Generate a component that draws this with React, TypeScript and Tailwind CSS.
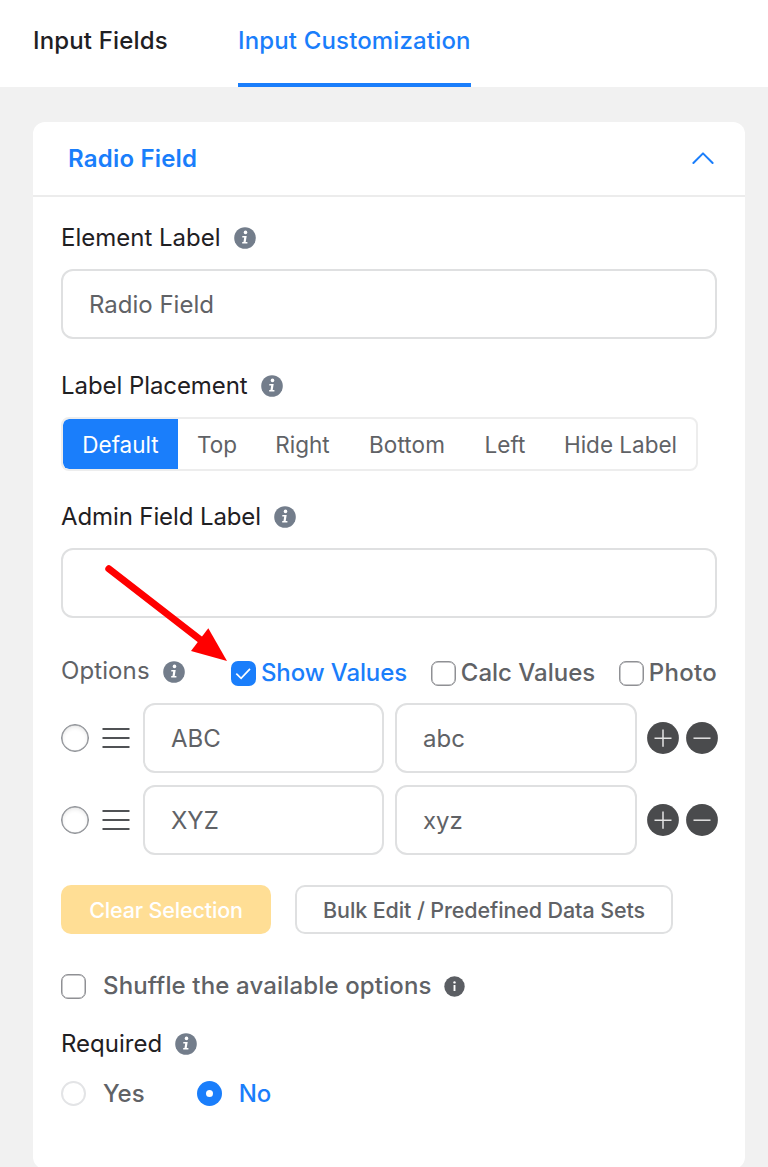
import { useState } from 'react';

interface Option {
  label: string;
  value: string;
}

const placements = [
  { name: 'Default', style: 'w-[115px]' },
  { name: 'Top', style: 'w-[78px]' },
  { name: 'Right', style: 'w-[93px]' },
  { name: 'Bottom', style: 'w-[116px] tracking-[0.1px]' },
  { name: 'Left', style: 'w-[80px]' },
  { name: 'Hide Label', style: 'w-[151px]' },
];

function InfoIcon() {
  return (
    <svg viewBox="0 0 22 22" className="h-[22px] w-[22px] shrink-0">
      <circle cx="11" cy="11" r="10.8" fill="#737d8b" />
      <circle cx="11.5" cy="5.4" r="1.8" fill="#fff" />
      <path d="M8.3 9h4.4l-1 6.1h1.7v1.4H8.2v-1.4h1.3l.7-4.7H8.3z" fill="#fff" />
    </svg>
  );
}

function SmallInfoIcon() {
  return (
    <svg viewBox="0 0 21 21" className="h-[21px] w-[21px] shrink-0">
      <circle cx="10.5" cy="10.5" r="10.2" fill="#5b5e63" />
      <circle cx="10.5" cy="6.4" r="1.2" fill="#fff" />
      <path d="M10.5 9v6" stroke="#fff" strokeWidth="1.9" />
    </svg>
  );
}

function FieldLabel({ text, className = '' }: { text: string; className?: string }) {
  return (
    <div className={`flex h-8 items-center gap-[13px] text-2xl text-[#1f2023] ${className}`}>
      <span className="whitespace-nowrap pt-px">{text}</span>
      <div className="pt-[2px]">
        <InfoIcon />
      </div>
    </div>
  );
}

function CheckBox({
  label,
  checked,
  onChange,
  className = '',
}: {
  label: string;
  checked: boolean;
  onChange: () => void;
  className?: string;
}) {
  return (
    <button
      type="button"
      onClick={onChange}
      className={`flex items-center whitespace-nowrap text-2xl font-[550] ${
        checked ? 'text-[#1a7efb]' : 'text-[#606266]'
      } ${className}`}
    >
      <span
        className={`flex h-[25px] w-[25px] shrink-0 items-center justify-center rounded-[7px] ${
          checked
            ? 'bg-[#1a7efb]'
            : 'border border-[#8f9094] bg-white shadow-[inset_0_0_0_0.5px_#8f9094]'
        }`}
      >
        {checked && (
          <svg viewBox="0 0 25 25" className="h-[25px] w-[25px]">
            <path d="M5.3 12.6l4.8 4.7 8.9-9.4" fill="none" stroke="#fff" strokeWidth="1.7" />
          </svg>
        )}
      </span>
      {label}
    </button>
  );
}

function RoundButton({ plus = false }: { plus?: boolean }) {
  return (
    <button type="button" className="h-8 w-8 shrink-0">
      <svg viewBox="0 0 32 32" className="h-8 w-8">
        <circle cx="16" cy="16" r="15.9" fill="#4a4b4d" />
        <path
          d={plus ? 'M7.5 16.2h17M16 7.5v17.2' : 'M7.5 16.2h17'}
          stroke="#e4e4e4"
          strokeWidth="1.5"
        />
      </svg>
    </button>
  );
}

export default function App() {
  const [elementLabel, setElementLabel] = useState('Radio Field');
  const [adminLabel, setAdminLabel] = useState('');
  const [placement, setPlacement] = useState('Default');
  const [showValues, setShowValues] = useState(true);
  const [calcValues, setCalcValues] = useState(false);
  const [photo, setPhoto] = useState(false);
  const [shuffle, setShuffle] = useState(false);
  const [required, setRequired] = useState('No');
  const [options, setOptions] = useState<Option[]>([
    { label: 'ABC', value: 'abc' },
    { label: 'XYZ', value: 'xyz' },
  ]);

  const updateOption = (index: number, change: Partial<Option>) => {
    setOptions(prev => prev.map((o, i) => (i === index ? { ...o, ...change } : o)));
  };

  const inputStyle =
    'block h-[70px] shrink-0 rounded-xl border-2 border-[#dfe0e1] bg-white px-[26px] text-2xl text-[#606266] outline-none';

  return (
    <div className="relative h-[1167px] w-[768px] overflow-hidden bg-[#f1f1f1] font-['Inter',sans-serif]">
      {/* Tabs */}
      <div className="flex h-[87px] gap-[70px] bg-white pl-[33px] text-2xl font-medium tracking-[0.15px]">
        <button type="button" className="h-[87px] w-[135px] whitespace-nowrap pb-[5px] text-left text-[#1f2023]">
          Input Fields
        </button>
        <button
          type="button"
          className="h-[87px] w-[233px] whitespace-nowrap border-b-4 border-[#1a7efb] pb-px text-left text-[#1a7efb]"
        >
          Input Customization
        </button>
      </div>

      <div className="mt-[35px] ml-[33px] h-[1047px] w-[712px] rounded-xl bg-white">
        {/* Card header */}
        <div className="flex h-[75px] items-center justify-between border-b-2 border-[#ececec] pr-[31px] pl-[35px]">
          <h2 className="text-2xl font-semibold tracking-[0.2px] text-[#1a7efb]">Radio Field</h2>
          <svg viewBox="0 0 22 14" className="mb-px h-[14px] w-[22px]">
            <path
              d="M1.4 12L11 2.4 20.6 12"
              fill="none"
              stroke="#1a7efb"
              strokeWidth="2"
              strokeLinecap="round"
              strokeLinejoin="round"
            />
          </svg>
        </div>

        <div className="px-7 pt-6">
          <FieldLabel text="Element Label" />
          <input
            type="text"
            value={elementLabel}
            onChange={e => setElementLabel(e.target.value)}
            className={`mt-4 w-full ${inputStyle}`}
          />

          <FieldLabel text="Label Placement" className="mt-[30px] tracking-[-0.07px]" />
          <div className="mt-4 flex h-[54px] w-[637px] overflow-hidden rounded-lg border-2 border-[#ededed] text-[22.5px]">
            {placements.map(p => (
              <button
                key={p.name}
                type="button"
                onClick={() => setPlacement(p.name)}
                className={`h-full whitespace-nowrap pt-px ${p.style} ${
                  placement === p.name ? 'rounded-l-md bg-[#1a7efb] text-white' : 'text-[#606266]'
                }`}
              >
                {p.name}
              </button>
            ))}
          </div>

          <FieldLabel text="Admin Field Label" className="mt-[29px] tracking-[-0.11px]" />
          <input
            type="text"
            value={adminLabel}
            onChange={e => setAdminLabel(e.target.value)}
            className={`mt-4 w-full ${inputStyle}`}
          />

          {/* Options */}
          <div className="mt-[37px] flex h-9 items-center">
            <div className="mb-1 flex w-[170px] items-center gap-[13px] text-2xl text-[#606266]">
              <span className="tracking-[0.1px]">Options</span>
              <div className="pt-[2px]">
                <InfoIcon />
              </div>
            </div>
            <CheckBox
              label="Show Values"
              checked={showValues}
              onChange={() => setShowValues(!showValues)}
              className="w-[200px] gap-[5px] tracking-[-0.1px]"
            />
            <CheckBox
              label="Calc Values"
              checked={calcValues}
              onChange={() => setCalcValues(!calcValues)}
              className="w-[188px] gap-[5px]"
            />
            <CheckBox
              label="Photo"
              checked={photo}
              onChange={() => setPhoto(!photo)}
              className="gap-[5px] tracking-[0.3px]"
            />
          </div>

          <div className="mt-3 flex flex-col gap-3">
            {options.map((option, index) => (
              <div key={index} className="flex items-center">
                <span className="h-7 w-7 shrink-0 rounded-full border border-[#8c8f94] shadow-[inset_0_0_0_0.5px_#8c8f94,inset_0_2px_4px_rgba(0,0,0,0.1)]" />
                <svg viewBox="0 0 28 22" className="ml-[13px] h-[22px] w-7 shrink-0">
                  <path d="M0.5 2h27M0.5 11h27M0.5 20h27" stroke="#505255" strokeWidth="2" />
                </svg>
                <input
                  type="text"
                  value={option.label}
                  onChange={e => updateOption(index, { label: e.target.value })}
                  className={`ml-[13px] w-[241px] ${inputStyle}`}
                />
                <input
                  type="text"
                  value={option.value}
                  onChange={e => updateOption(index, { value: e.target.value })}
                  className={`ml-[11px] w-[242px] ${inputStyle}`}
                />
                <div className="ml-2.5 flex shrink-0 gap-[7px]">
                  <RoundButton plus />
                  <RoundButton />
                </div>
              </div>
            ))}
          </div>

          <div className="mt-[30px] flex gap-6 text-[21.5px] font-[550]">
            <button
              type="button"
              className="h-[49px] w-[210px] whitespace-nowrap rounded-[10px] bg-[#ffde95] pt-px tracking-[-0.15px] text-white"
            >
              Clear Selection
            </button>
            <button
              type="button"
              className="h-[49px] w-[378px] whitespace-nowrap rounded-[10px] border-2 border-[#dfe0e1] pt-px tracking-[-0.11px] text-[#606266]"
            >
              Bulk Edit / Predefined Data Sets
            </button>
          </div>

          <div className="mt-9 flex h-8 items-center gap-3">
            <CheckBox
              label="Shuffle the available options"
              checked={shuffle}
              onChange={() => setShuffle(!shuffle)}
              className="gap-[17px] tracking-[0.15px]"
            />
            <SmallInfoIcon />
          </div>

          <FieldLabel text="Required" className="mt-[25px]" />
          <div className="mt-[18px] flex h-8 gap-[52px]">
            {['Yes', 'No'].map(answer => (
              <button
                key={answer}
                type="button"
                onClick={() => setRequired(answer)}
                className={`flex items-center gap-[17px] text-2xl font-medium ${
                  required === answer ? 'text-[#1a7efb]' : 'text-[#606266]'
                }`}
              >
                <span
                  className={`flex h-[25px] w-[25px] items-center justify-center rounded-full ${
                    required === answer ? 'bg-[#1a7efb]' : 'border-2 border-[#e3e4e6]'
                  }`}
                >
                  {required === answer && <span className="h-[7px] w-[7px] rounded-full bg-white" />}
                </span>
                <span className="pt-px">{answer}</span>
              </button>
            ))}
          </div>
        </div>
      </div>

      {/* Pointer to the Show Values checkbox */}
      <svg
        viewBox="0 0 130 102"
        className="pointer-events-none absolute top-[561px] left-[100px] h-[102px] w-[130px]"
      >
        <path d="M8.8 7.8L102 80" stroke="#ff0000" strokeWidth="7" strokeLinecap="round" />
        <path d="M127 100L108.3 67.3 91 90z" fill="#ff0000" />
      </svg>
    </div>
  );
}
